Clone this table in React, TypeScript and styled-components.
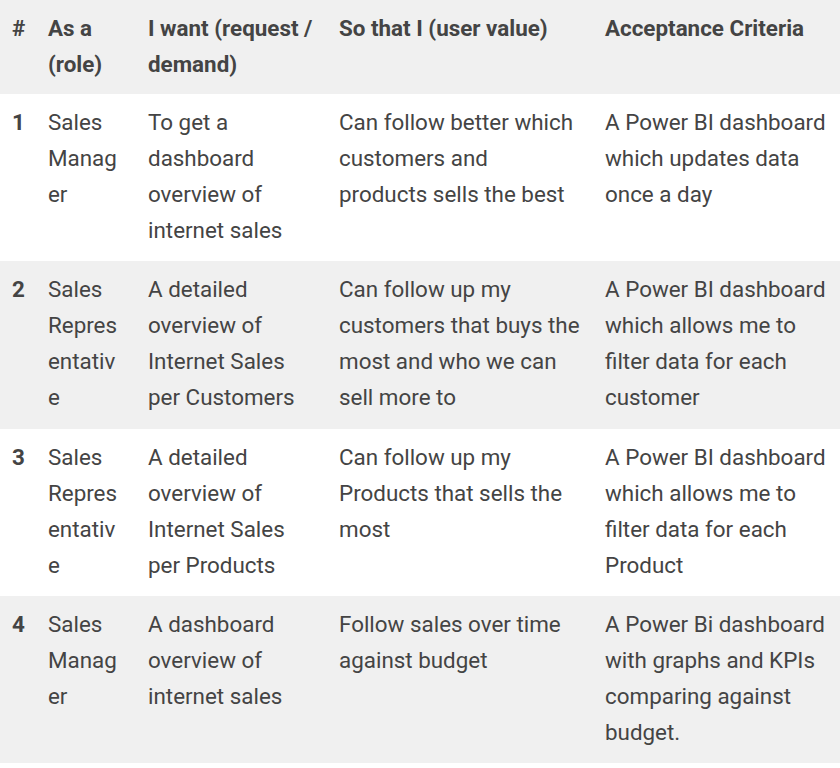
import React from "react";
import styled, { createGlobalStyle } from "styled-components";

const Global = createGlobalStyle`
  html, body { margin: 0; padding: 0; background: #ffffff; }
  body { font-family: Roboto, "Liberation Sans", Arial, sans-serif; }
`;

const Table = styled.table`
  width: 840px;
  table-layout: fixed;
  border-collapse: collapse;
  border-spacing: 0;
  font-family: Roboto, "Liberation Sans", Arial, sans-serif;
  font-size: 22.4px;
  line-height: 36px;
  color: #444444;
`;

const Row = styled.tr<{ $shaded: boolean }>`
  background: ${(p) => (p.$shaded ? "#f0f0f0" : "#ffffff")};
`;

const HeadCell = styled.th`
  text-align: left;
  vertical-align: top;
  font-weight: 700;
  padding: 10px 13px 12px 12px;
  overflow-wrap: anywhere;
`;

const Cell = styled.td<{ $bold?: boolean }>`
  vertical-align: top;
  font-weight: ${(p) => (p.$bold ? 700 : 400)};
  padding: 10px 13px 13.3px 12px;
  overflow-wrap: anywhere;
`;

const widths = [36, 100, 191, 266, 247];

const headers = [
  "#",
  "As a (role)",
  "I want (request / demand)",
  "So that I (user value)",
  "Acceptance Criteria",
];

const rows: string[][] = [
  [
    "1",
    "Sales Manager",
    "To get a dashboard overview of internet sales",
    "Can follow better which customers and products sells the best",
    "A Power BI dashboard which updates data once a day",
  ],
  [
    "2",
    "Sales Representative",
    "A detailed overview of Internet Sales per Customers",
    "Can follow up my customers that buys the most and who we can sell more to",
    "A Power BI dashboard which allows me to filter data for each customer",
  ],
  [
    "3",
    "Sales Representative",
    "A detailed overview of Internet Sales per Products",
    "Can follow up my Products that sells the most",
    "A Power BI dashboard which allows me to filter data for each Product",
  ],
  [
    "4",
    "Sales Manager",
    "A dashboard overview of internet sales",
    "Follow sales over time against budget",
    "A Power Bi dashboard with graphs and KPIs comparing against budget.",
  ],
];

export default function App() {
  return (
    <>
      <Global />
      <Table>
        <colgroup>
          {widths.map((w, i) => (
            <col key={i} style={{ width: w }} />
          ))}
        </colgroup>
        <thead>
          <Row $shaded>
            {headers.map((h) => (
              <HeadCell key={h}>{h}</HeadCell>
            ))}
          </Row>
        </thead>
        <tbody>
          {rows.map((r, i) => (
            <Row key={r[0]} $shaded={i % 2 === 1}>
              {r.map((c, j) => (
                <Cell key={j} $bold={j === 0}>
                  {c}
                </Cell>
              ))}
            </Row>
          ))}
        </tbody>
      </Table>
    </>
  );
}
